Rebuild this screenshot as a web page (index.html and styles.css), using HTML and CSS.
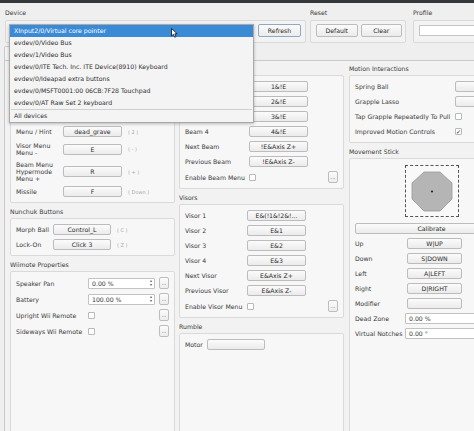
FILE: index.html
```html
<!DOCTYPE html>
<html>
<head>
   <meta http-equiv="Content-Type" content="text/html; charset=UTF-8" />
   <link rel="stylesheet" href="styles.css">
</head>
<body>

<div class="titlebar"></div>

<div class="toprow">
    <div class="tgroup device">
        <div class="gtitle">Device</div>
        <div class="tbox">
            <div class="combo">XInput2/0/Virtual core pointer</div>
            <div class="btn refresh">Refresh</div>
        </div>
    </div>
    <div class="tgroup reset">
        <div class="gtitle">Reset</div>
        <div class="tbox">
            <div class="btn wide">Default</div>
            <div class="btn wide">Clear</div>
        </div>
    </div>
    <div class="tgroup profile">
        <div class="gtitle">Profile</div>
        <div class="tbox">
            <div class="field"></div>
        </div>
    </div>
</div>

<div class="tabs">
    <div class="tabbar"><div class="tab">Wii Remote</div></div>
    <div class="pane">

        <!-- left column -->
        <div class="col">
            <div class="gtitle">Buttons</div>
            <div class="box rows buttons">
                <span class="lbl">Fire</span><div class="btn">Click 0</div><span class="hint">( A )</span>
                <span class="lbl">Jump</span><div class="btn">space</div><span class="hint">( B )</span>
                <span class="lbl">Map</span><div class="btn">Tab</div><span class="hint">( 1 )</span>
                <span class="lbl">Menu / Hint</span><div class="btn">dead_grave</div><span class="hint">( 2 )</span>
                <span class="lbl two">Visor Menu<br>Menu -</span><div class="btn">E</div><span class="hint">( - )</span>
                <span class="lbl">Beam Menu<br>Hypermode<br>Menu +</span><div class="btn">R</div><span class="hint">( + )</span>
                <span class="lbl">Missile</span><div class="btn">F</div><span class="hint">( Down )</span>
            </div>

            <div class="gtitle next">Nunchuk Buttons</div>
            <div class="box rows nunchuk">
                <span class="lbl">Morph Ball</span><div class="btn">Control_L</div><span class="hint">( C )</span>
                <span class="lbl">Lock-On</span><div class="btn">Click 3</div><span class="hint">( Z )</span>
            </div>

            <div class="gtitle next">Wiimote Properties</div>
            <div class="box rows wiimote fill">
                <span class="lbl">Speaker Pan</span><div class="spin">0.00 %<span class="arrows">&#9652;<br>&#9662;</span></div><div class="more">...</div>
                <span class="lbl">Battery</span><div class="spin">100.00 %<span class="arrows">&#9652;<br>&#9662;</span></div><div class="more">...</div>
                <span class="lbl">Upright Wii Remote</span><div class="chk"></div><div class="more">...</div>
                <span class="lbl">Sideways Wii Remote</span><div class="chk"></div><div class="more">...</div>
            </div>
        </div>

        <!-- middle column -->
        <div class="col mid">
            <div class="gtitle">Beams</div>
            <div class="box rows beams">
                <span class="lbl">Beam 1</span><div class="btn">1&amp;!E</div><span></span>
                <span class="lbl">Beam 2</span><div class="btn">2&amp;!E</div><span></span>
                <span class="lbl">Beam 3</span><div class="btn">3&amp;!E</div><span></span>
                <span class="lbl">Beam 4</span><div class="btn">4&amp;!E</div><span></span>
                <span class="lbl">Next Beam</span><div class="btn">!E&amp;Axis Z+</div><span></span>
                <span class="lbl">Previous Beam</span><div class="btn">!E&amp;Axis Z-</div><span></span>
                <span class="lbl">Enable Beam Menu</span><div class="chk"></div><div class="more end">...</div>
            </div>

            <div class="gtitle next">Visors</div>
            <div class="box rows visors">
                <span class="lbl">Visor 1</span><div class="btn">E&amp;(!1&amp;!2&amp;!...</div><span></span>
                <span class="lbl">Visor 2</span><div class="btn">E&amp;1</div><span></span>
                <span class="lbl">Visor 3</span><div class="btn">E&amp;2</div><span></span>
                <span class="lbl">Visor 4</span><div class="btn">E&amp;3</div><span></span>
                <span class="lbl">Next Visor</span><div class="btn">E&amp;Axis Z+</div><span></span>
                <span class="lbl">Previous Visor</span><div class="btn">E&amp;Axis Z-</div><span></span>
                <span class="lbl">Enable Visor Menu</span><div class="chk"></div><div class="more end">...</div>
            </div>

            <div class="gtitle next">Rumble</div>
            <div class="box rows rumble fill">
                <span class="lbl">Motor</span><div class="btn"></div><span></span>
            </div>
        </div>

        <!-- right column -->
        <div class="col right">
            <div class="gtitle">Motion Interactions</div>
            <div class="box rows motion">
                <span class="lbl">Spring Ball</span><div class="btn"></div>
                <span class="lbl">Grapple Lasso</span><div class="btn"></div>
                <span class="lbl">Tap Grapple Repeatedly To Pull</span><div class="chk"></div>
                <span class="lbl">Improved Motion Controls</span><div class="chk on">&#10003;</div>
            </div>

            <div class="gtitle next">Movement Stick</div>
            <div class="box stickbox fill">
                <div class="stick">
                    <svg width="52" height="50" viewBox="0 0 52 50">
                        <polygon points="18,6 34,6 46,17 46,33 34,45 18,45 6,33 6,17" fill="#b5b5b5" stroke="#9a9a9a" stroke-width="0.8"/>
                        <circle cx="26" cy="25.5" r="1.1" fill="#222"/>
                    </svg>
                </div>
                <div class="btn calibrate">Calibrate</div>
                <div class="rows stickrows">
                    <span class="lbl">Up</span><div class="btn">W|UP</div>
                    <span class="lbl">Down</span><div class="btn">S|DOWN</div>
                    <span class="lbl">Left</span><div class="btn">A|LEFT</div>
                    <span class="lbl">Right</span><div class="btn">D|RIGHT</div>
                    <span class="lbl">Modifier</span><div class="btn"></div>
                    <span class="lbl">Dead Zone</span><div class="spin long">0.00 %</div>
                    <span class="lbl">Virtual Notches</span><div class="spin long">0.00 °</div>
                </div>
            </div>
        </div>

    </div>
</div>

<div class="popup">
    <div class="item sel">XInput2/0/Virtual core pointer</div>
    <div class="item">evdev/0/Video Bus</div>
    <div class="item">evdev/1/Video Bus</div>
    <div class="item">evdev/0/ITE Tech. Inc. ITE Device(8910) Keyboard</div>
    <div class="item">evdev/0/Ideapad extra buttons</div>
    <div class="item">evdev/0/MSFT0001:00 06CB:7F28 Touchpad</div>
    <div class="item">evdev/0/AT Raw Set 2 keyboard</div>
    <div class="sep"></div>
    <div class="item">All devices</div>
</div>

<svg class="cursor" width="7" height="10" viewBox="0 0 7 10">
    <path d="M0.5 0.5 L0.5 8 L2.4 6.3 L3.7 9.2 L5 8.6 L3.8 5.8 L6.2 5.8 Z" fill="#fff" stroke="#111" stroke-width="0.8"/>
</svg>

</body>
</html>
```

FILE: styles.css
```css
* {
    margin: 0; padding: 0;
    box-sizing: border-box;
}
body {
    width: 474px;
    height: 431px;
    overflow: hidden;
    position: relative;
    background: #efefef;
    font-family: "DejaVu Sans", Verdana, sans-serif;
    font-size: 6.2px;
    color: #333;
}
.titlebar {
    height: 3px;
    background: #34383b;
}

/* top row */
.toprow {
    display: flex;
    padding: 5px 0 0 5px;
}
.gtitle {
    height: 10px;
    line-height: 10px;
    margin-bottom: 1px;
    color: #3a3a3a;
    white-space: nowrap;
}
.toprow .gtitle { margin-bottom: 2px; }
.tbox {
    height: 23px;
    display: flex;
    align-items: flex-start;
    background: #f3f3f3;
    border: 1px solid #d9d9d9;
    border-radius: 2px;
}
.device .tbox { width: 301px; padding: 3px 0 0 3px; }
.reset { margin-left: 4px; }
.reset .tbox { width: 96px; padding: 3px 0 0 5px; }
.profile { margin-left: 7px; }
.profile .tbox { width: 110px; padding: 4px 0 0 5px; }
.combo {
    width: 245px;
    height: 13px;
    margin-right: 4px;
    background: #fbfbfb;
    border: 1px solid #bbb;
}
.field {
    width: 100px;
    height: 11px;
    background: #fff;
    border: 1px solid #c4c4c4;
}

/* buttons and inputs */
.btn {
    height: 11px;
    line-height: 9px;
    text-align: center;
    white-space: nowrap;
    overflow: hidden;
    color: #2a2a2a;
    background: linear-gradient(#fbfbfb, #ebebeb);
    border: 1px solid #bcbcbc;
    border-radius: 2px;
}
.btn.refresh {
    width: 43px;
    height: 13px;
    line-height: 11px;
    border-color: #8ea9c4;
}
.btn.wide {
    width: 42px;
    height: 13px;
    line-height: 11px;
    margin-right: 3px;
}
.spin {
    position: relative;
    height: 11px;
    line-height: 9px;
    padding-left: 3px;
    background: #fff;
    border: 1px solid #c2c2c2;
    border-radius: 1px;
    white-space: nowrap;
}
.spin .arrows {
    position: absolute;
    right: 2px;
    top: 0;
    font-size: 4px;
    line-height: 4px;
    color: #555;
}
.chk {
    width: 7px;
    height: 7px;
    background: #fff;
    border: 1px solid #b8b8b8;
    border-radius: 1px;
}
.chk.on {
    font-size: 6px;
    line-height: 5px;
    text-align: center;
    color: #111;
    font-weight: bold;
}
.more {
    width: 10px;
    height: 12px;
    line-height: 11px;
    text-align: center;
    font-size: 5px;
    color: #444;
    background: linear-gradient(#fbfbfb, #ededed);
    border: 1px solid #bdbdbd;
    border-radius: 2px;
}
.more.end { justify-self: end; }

/* tab pane */
.tabs { margin-top: 3px; }
.tabbar { height: 14px; padding-left: 4px; }
.tab {
    width: 60px;
    height: 14px;
    line-height: 13px;
    padding-left: 6px;
    background: #f3f3f3;
    border: 1px solid #c9c9c9;
    border-bottom: none;
    border-radius: 2px 2px 0 0;
}
.pane {
    display: flex;
    height: 400px;
    margin-left: 4px;
    padding: 3px 0 0 5px;
    background: #f2f2f2;
    border: 1px solid #c9c9c9;
    border-right: none;
}
.col {
    width: 165px;
    flex-shrink: 0;
    display: flex;
    flex-direction: column;
}
.col.mid { margin-left: 4px; }
.col.right { margin-left: 5px; }
.gtitle.next { margin-top: 4px; }
.box {
    background: #f7f7f7;
    border: 1px solid #dadada;
    border-radius: 2px;
    padding: 5px;
}
.box.fill { flex: 1; }

/* label / control grids */
.rows {
    display: grid;
    grid-auto-rows: minmax(11px, auto);
    row-gap: 4px;
    align-items: center;
    align-content: start;
}
.lbl {
    line-height: 7px;
    color: #3a3a3a;
    white-space: nowrap;
}
.lbl.two { padding: 1px 0; }
.hint {
    padding-left: 6px;
    font-size: 5px;
    color: #a8a8a8;
    white-space: nowrap;
}
.buttons { grid-template-columns: 47px 59px auto; }
.nunchuk { grid-template-columns: 37px 58px auto; }
.wiimote { grid-template-columns: 72px 67px 10px; column-gap: 0; }
.wiimote .more { margin-left: 4px; }
.beams { grid-template-columns: 64px 59px 1fr; }
.visors { grid-template-columns: 62px 59px 1fr; }
.rumble { grid-template-columns: 22px 58px 1fr; }
.motion { grid-template-columns: 100px 57px; }

.stickbox {
    display: flex;
    flex-direction: column;
}
.stick {
    align-self: center;
    width: 54px;
    height: 52px;
    margin-top: 1px;
    background: #f9f9f9;
    border: 1px dashed #555;
}
.stick svg { display: block; }
.btn.calibrate { margin-top: 6px; }
.stickrows {
    margin-top: 4px;
    grid-template-columns: 50px 57px;
}
.stickrows .btn { margin-left: 2px; }
.spin.long { width: 80px; }

/* device dropdown, open over the page */
.popup {
    position: absolute;
    left: 9px;
    top: 24px;
    width: 245px;
    height: 99px;
    background: #f4f4f4;
    border: 1px solid #a9a9a9;
    box-shadow: 0 1px 3px rgba(0, 0, 0, 0.25);
}
.item {
    height: 12px;
    line-height: 12px;
    padding-left: 4px;
    color: #2e2e2e;
    white-space: nowrap;
}
.item.sel {
    background: #3a8ad6;
    color: #fff;
}
.sep {
    height: 1px;
    margin: 0 1px;
    background: #cfcfcf;
}
.cursor {
    position: absolute;
    left: 171px;
    top: 28px;
}
```
